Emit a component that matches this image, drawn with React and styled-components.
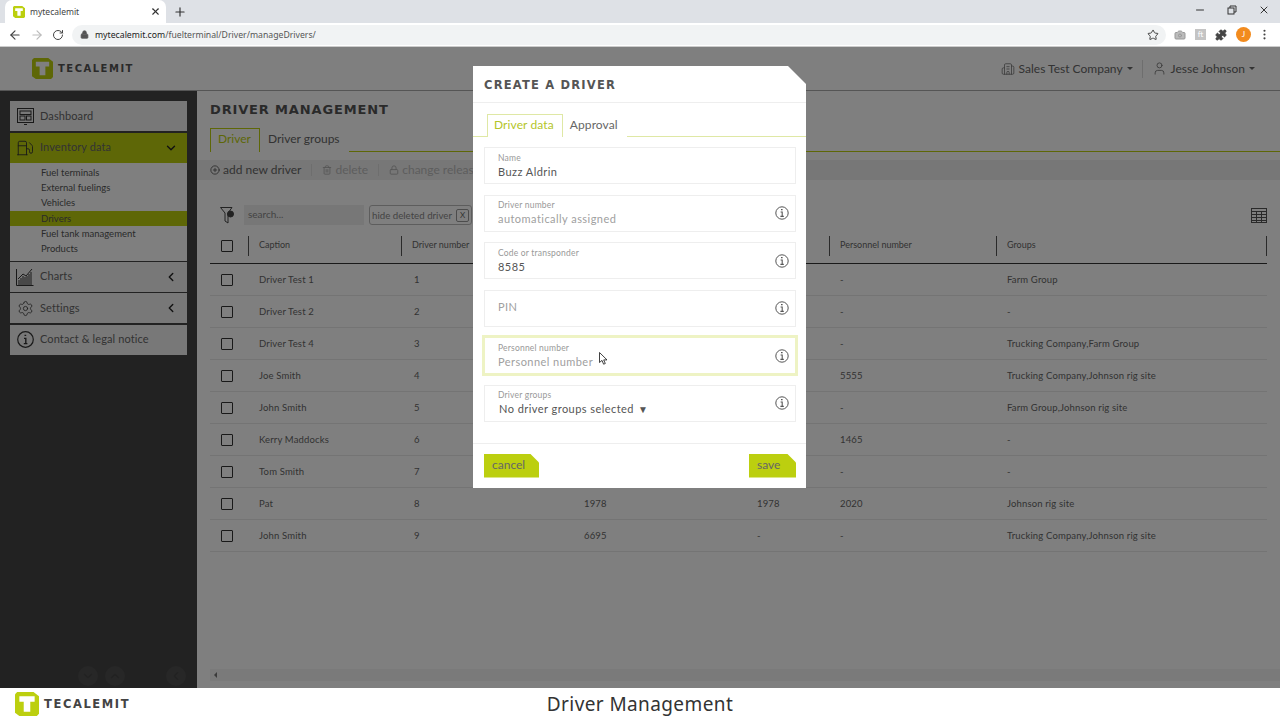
import React from "react";
import styled, { createGlobalStyle } from "styled-components";
import {
  ArrowLeft,
  ArrowRight,
  RotateCw,
  Lock,
  Star,
  Camera,
  Puzzle,
  MoreVertical,
  X,
  Plus,
  Minus,
  ChevronDown,
  ChevronUp,
  ChevronLeft,
  Fuel,
  Settings,
  Building2,
  User,
  Trash2,
  CirclePlus,
} from "lucide-react";

const green = "#bccf0f";
const font = `Lato, "Noto Sans", sans-serif`;

const GlobalStyle = createGlobalStyle`
  html, body {
    margin: 0;
    padding: 0;
    background: #fff;
  }
  * {
    box-sizing: border-box;
  }
  body {
    font-family: ${font};
    overflow: hidden;
  }
`;

const rows = [
  ["Driver Test 1", "1", "", "", "-", "Farm Group"],
  ["Driver Test 2", "2", "", "", "-", "-"],
  ["Driver Test 4", "3", "", "", "-", "Trucking Company,Farm Group"],
  ["Joe Smith", "4", "", "", "5555", "Trucking Company,Johnson rig site"],
  ["John Smith", "5", "", "", "-", "Farm Group,Johnson rig site"],
  ["Kerry Maddocks", "6", "", "", "1465", "-"],
  ["Tom Smith", "7", "", "", "-", "-"],
  ["Pat", "8", "1978", "1978", "2020", "Johnson rig site"],
  ["John Smith", "9", "6695", "-", "-", "Trucking Company,Johnson rig site"],
];

const subItems = [
  "Fuel terminals",
  "External fuelings",
  "Vehicles",
  "Drivers",
  "Fuel tank management",
  "Products",
];

const LogoMark = ({ size = 22 }) => (
  <svg width={size} height={size} viewBox="0 0 22 22">
    <path d="M2 0H17L22 4V20L20 22H4L0 19V2Z" fill={green} />
    <path d="M4 4H18V9H14V18H8V9H4Z" fill="#fff" />
  </svg>
);

const InfoIcon = () => (
  <svg width="14" height="14" viewBox="0 0 14 14" fill="none" stroke="#555">
    <circle cx="7" cy="7" r="6.2" strokeWidth="1" />
    <path d="M6 3.6H7.6M5.6 6H7.2V10.2M5.4 10.4H8.8" strokeWidth="1.1" />
  </svg>
);

const DashIcon = () => (
  <svg width="17" height="17" viewBox="0 0 17 17" fill="none" stroke="#333">
    <rect x="0.5" y="0.5" width="16" height="14" />
    <rect x="3" y="3" width="11" height="3.5" />
    <rect x="3" y="8" width="5" height="4" />
    <rect x="9.5" y="8" width="4.5" height="4" />
    <path d="M7 16.5H10" />
  </svg>
);

const ChartIcon = () => (
  <svg width="18" height="18" viewBox="0 0 18 18" fill="none" stroke="#333">
    <path d="M0.5 1V17.5H17.5" />
    <path d="M2 11L7 6L10 8L16 1" />
    <path d="M3 17V12M5 17V10M7 17V8M9 17V9M11 17V8M13 17V6M15 17V4" />
  </svg>
);

const MenuInfoIcon = () => (
  <svg width="17" height="17" viewBox="0 0 17 17" fill="none" stroke="#333">
    <circle cx="8.5" cy="8.5" r="7.8" strokeWidth="1.2" />
    <path d="M7.5 4.4H9.2M7 7.4H8.8V12.4M6.8 12.6H10.4" strokeWidth="1.4" />
  </svg>
);

const FilterIcon = () => (
  <svg width="16" height="17" viewBox="0 0 16 17" fill="none" stroke="#444">
    <path d="M0.5 0.5H12L8 6V16L5 14V6Z" />
    <circle cx="10.5" cy="7" r="3" fill="#444" />
  </svg>
);

const GridIcon = () => (
  <svg width="16" height="15" viewBox="0 0 16 15" fill="none" stroke="#555">
    <rect x="0.5" y="0.5" width="15" height="14" />
    <path d="M0.5 3.5H15.5M0.5 6.5H15.5M0.5 9.5H15.5M0.5 12.5H15.5" />
    <path d="M5.5 3.5V14.5M10.5 3.5V14.5" />
  </svg>
);

const CursorIcon = () => (
  <svg width="9" height="13" viewBox="0 0 9 13">
    <path
      d="M0.5 0.5V10.5L3 8.4L4.6 12.2L6.3 11.5L4.7 7.9H8Z"
      fill="#fff"
      stroke="#111"
      strokeWidth="0.8"
    />
  </svg>
);

const RestoreIcon = () => (
  <svg width="10" height="10" viewBox="0 0 10 10" fill="none" stroke="#333">
    <rect x="1" y="3" width="6" height="6" />
    <path d="M3 3V1H9V7H7" />
  </svg>
);

const Field = ({ label, value, muted, info = true, focused, bare }) => (
  <FieldBox $focused={focused}>
    <div>
      {label && <FieldLabel>{label}</FieldLabel>}
      <FieldValue $muted={muted} $bare={bare}>
        {value}
      </FieldValue>
    </div>
    {info && (
      <InfoSlot>
        <InfoIcon />
      </InfoSlot>
    )}
  </FieldBox>
);

export default function App() {
  return (
    <Shell>
      <GlobalStyle />
      <TabStrip>
        <BrowserTab>
          <Favicon>
            <LogoMark size={12} />
          </Favicon>
          <TabTitle>mytecalemit</TabTitle>
          <X size={11} color="#333" strokeWidth={2.4} />
        </BrowserTab>
        <NewTab>
          <Plus size={14} color="#333" strokeWidth={2} />
        </NewTab>
        <WindowControls>
          <Minus size={12} color="#333" />
          <RestoreIcon />
          <X size={12} color="#333" />
        </WindowControls>
      </TabStrip>
      <Toolbar>
        <NavIcons>
          <ArrowLeft size={14} color="#444" />
          <ArrowRight size={14} color="#bbb" />
          <RotateCw size={12} color="#444" />
        </NavIcons>
        <UrlBar>
          <Lock size={9} color="#555" fill="#555" />
          <UrlText>
            mytecalemit.com<span>/fuelterminal/Driver/manageDrivers/</span>
          </UrlText>
          <Star size={12} color="#444" />
        </UrlBar>
        <ExtensionIcons>
          <Camera size={12} color="#999" fill="#bbb" />
          <ExtBox>ft</ExtBox>
          <Puzzle size={12} color="#444" fill="#444" />
        </ExtensionIcons>
        <Avatar>J</Avatar>
        <MoreVertical size={13} color="#444" />
      </Toolbar>

      <Page>
        <Header>
          <Brand>
            <LogoMark size={21} />
            <BrandName>TECALEMIT</BrandName>
          </Brand>
          <HeaderRight>
            <HeaderItem>
              <Building2 size={14} color="#777" strokeWidth={1.4} />
              Sales Test Company
              <Caret />
            </HeaderItem>
            <HeaderDivider />
            <HeaderItem>
              <User size={15} color="#777" strokeWidth={1.4} />
              Jesse Johnson
              <Caret />
            </HeaderItem>
          </HeaderRight>
        </Header>
        <Body>
          <Sidebar>
            <MenuItem>
              <MenuIcon>
                <DashIcon />
              </MenuIcon>
              Dashboard
            </MenuItem>
            <MenuItem $active $open>
              <MenuIcon>
                <Fuel size={18} color="#333" strokeWidth={1.2} />
              </MenuIcon>
              Inventory data
              <MenuChevron>
                <ChevronDown size={14} color="#222" strokeWidth={2.4} />
              </MenuChevron>
            </MenuItem>
            <SubMenu>
              {subItems.map((item) => (
                <SubItem key={item} $active={item === "Drivers"}>
                  {item}
                </SubItem>
              ))}
            </SubMenu>
            <MenuItem>
              <MenuIcon>
                <ChartIcon />
              </MenuIcon>
              Charts
              <MenuChevron>
                <ChevronLeft size={14} color="#222" strokeWidth={2.4} />
              </MenuChevron>
            </MenuItem>
            <MenuItem>
              <MenuIcon>
                <Settings size={17} color="#333" strokeWidth={1.1} />
              </MenuIcon>
              Settings
              <MenuChevron>
                <ChevronLeft size={14} color="#222" strokeWidth={2.4} />
              </MenuChevron>
            </MenuItem>
            <MenuItem>
              <MenuIcon>
                <MenuInfoIcon />
              </MenuIcon>
              Contact &amp; legal notice
            </MenuItem>
            <SidebarFoot>
              <RoundButton>
                <ChevronDown size={14} color="#444" />
              </RoundButton>
              <RoundButton>
                <ChevronUp size={14} color="#444" />
              </RoundButton>
              <RoundButton $push>
                <ChevronLeft size={14} color="#444" />
              </RoundButton>
            </SidebarFoot>
          </Sidebar>
          <Main>
            <Title>DRIVER MANAGEMENT</Title>
            <PageTabs>
              <PageTab $active>Driver</PageTab>
              <PageTab>Driver groups</PageTab>
            </PageTabs>
            <ActionBar>
              <Action>
                <CirclePlus size={10} color="#555" />
                add new driver
              </Action>
              <ActionSep />
              <Action $off>
                <Trash2 size={10} color="#aaa" />
                delete
              </Action>
              <ActionSep />
              <Action $off>
                <Lock size={10} color="#aaa" />
                change release
              </Action>
            </ActionBar>
            <FilterRow>
              <FilterIcon />
              <SearchBox>search...</SearchBox>
              <Chip>
                hide deleted driver
                <ChipX>X</ChipX>
              </Chip>
              <GridToggle>
                <GridIcon />
              </GridToggle>
            </FilterRow>
            <HeadRow>
              <CheckCell>
                <Check />
              </CheckCell>
              <HeadCell>Caption</HeadCell>
              <HeadCell>Driver number</HeadCell>
              <HeadCell>Code or transponder</HeadCell>
              <HeadCell>PIN</HeadCell>
              <HeadCell>Personnel number</HeadCell>
              <HeadCell $last>Groups</HeadCell>
            </HeadRow>
            {rows.map((row) => (
              <Row key={row[1]}>
                <CheckCell>
                  <Check />
                </CheckCell>
                <Cell>{row[0]}</Cell>
                <Cell $indent>{row[1]}</Cell>
                <Cell>{row[2]}</Cell>
                <Cell>{row[3]}</Cell>
                <Cell>{row[4]}</Cell>
                <Cell>{row[5]}</Cell>
              </Row>
            ))}
            <ScrollBar>
              <ScrollArrow />
            </ScrollBar>
          </Main>
        </Body>
        <Backdrop />
        <Modal>
          <ModalTitle>CREATE A DRIVER</ModalTitle>
          <ModalTabs>
            <ModalTab $active>Driver data</ModalTab>
            <ModalTab>Approval</ModalTab>
          </ModalTabs>
          <FieldList>
            <Field label="Name" value="Buzz Aldrin" info={false} />
            <Field label="Driver number" value="automatically assigned" muted />
            <Field label="Code or transponder" value="8585" />
            <Field value="PIN" muted bare />
            <Field
              label="Personnel number"
              value="Personnel number"
              muted
              focused
            />
            <Field
              label="Driver groups"
              value={
                <GroupValue>
                  No driver groups selected
                  <GroupArrow>▼</GroupArrow>
                </GroupValue>
              }
            />
          </FieldList>
          <ModalFooter>
            <CutButton $width={55}>cancel</CutButton>
            <CutButton $width={47}>save</CutButton>
          </ModalFooter>
        </Modal>
        <Pointer>
          <CursorIcon />
        </Pointer>
      </Page>

      <Caption>
        <FootBrand>
          <LogoMark size={24} />
          <FootName>TECALEMIT</FootName>
        </FootBrand>
        Driver Management
      </Caption>
    </Shell>
  );
}

const Shell = styled.div`
  width: 1280px;
  height: 720px;
  display: flex;
  flex-direction: column;
  overflow: hidden;
`;

const TabStrip = styled.div`
  height: 23px;
  background: #dee1e6;
  display: flex;
  align-items: flex-end;
  padding-left: 5px;
  flex: none;
`;

const BrowserTab = styled.div`
  width: 161px;
  height: 23px;
  background: #fff;
  border-radius: 7px 7px 0 0;
  display: flex;
  align-items: center;
  padding: 0 5px 0 8px;
`;

const Favicon = styled.span`
  display: flex;
  margin-right: 5px;
`;

const TabTitle = styled.span`
  flex: 1;
  font-family: "Noto Sans", sans-serif;
  font-size: 8.5px;
  color: #444;
`;

const NewTab = styled.div`
  width: 28px;
  height: 23px;
  display: flex;
  align-items: center;
  justify-content: center;
`;

const WindowControls = styled.div`
  margin-left: auto;
  height: 23px;
  width: 92px;
  padding: 0 10px 4px 6px;
  display: flex;
  align-items: center;
  justify-content: space-between;
`;

const Toolbar = styled.div`
  height: 24px;
  background: #fff;
  display: flex;
  align-items: center;
  flex: none;
  border-bottom: 1px solid #ccc;
`;

const NavIcons = styled.div`
  width: 72px;
  padding: 0 8px;
  display: flex;
  align-items: center;
  justify-content: space-between;
`;

const UrlBar = styled.div`
  width: 1094px;
  height: 20px;
  background: #f1f3f4;
  border-radius: 10px;
  display: flex;
  align-items: center;
  padding: 0 7px 0 8px;
`;

const UrlText = styled.span`
  flex: 1;
  font-family: "Noto Sans", sans-serif;
  font-size: 8.7px;
  color: #222;
  margin-left: 6px;
  span {
    color: #555;
  }
`;

const ExtensionIcons = styled.div`
  padding-left: 8px;
  margin-right: 9px;
  display: flex;
  align-items: center;
  gap: 9px;
`;

const ExtBox = styled.span`
  width: 11px;
  height: 11px;
  background: #c4c4c4;
  color: #fff;
  font-size: 8px;
  line-height: 11px;
  text-align: center;
`;

const Avatar = styled.div`
  width: 15px;
  height: 15px;
  border-radius: 50%;
  background: #f28b1e;
  color: #fff;
  font-size: 8px;
  line-height: 15px;
  text-align: center;
  margin-right: 7px;
`;

const Page = styled.div`
  position: relative;
  flex: 1;
  display: flex;
  flex-direction: column;
  min-height: 0;
  background: #fff;
`;

const Header = styled.div`
  height: 44px;
  display: flex;
  align-items: center;
  justify-content: space-between;
  padding: 0 25px 0 32px;
  border-bottom: 1px solid #aaa;
  flex: none;
`;

const Brand = styled.div`
  display: flex;
  align-items: center;
  gap: 5px;
`;

const BrandName = styled.span`
  font-family: "DejaVu Sans", sans-serif;
  font-weight: 700;
  font-size: 10px;
  letter-spacing: 1.5px;
  color: #555;
`;

const HeaderRight = styled.div`
  display: flex;
  align-items: center;
`;

const HeaderItem = styled.div`
  display: flex;
  align-items: center;
  gap: 4px;
  font-size: 12px;
  color: #666;
`;

const HeaderDivider = styled.div`
  width: 1px;
  height: 18px;
  background: #ddd;
  margin: 0 9px;
`;

const Caret = styled.span`
  width: 0;
  height: 0;
  border-left: 3px solid transparent;
  border-right: 3px solid transparent;
  border-top: 3px solid #666;
`;

const Body = styled.div`
  flex: 1;
  display: flex;
  min-height: 0;
`;

const Sidebar = styled.div`
  width: 197px;
  flex: none;
  background: #444;
  padding: 10px 10px 0;
  display: flex;
  flex-direction: column;
`;

const MenuItem = styled.div`
  height: 30px;
  margin-bottom: ${(p) => (p.$open ? "0" : "1.5px")};
  background: ${(p) => (p.$active ? green : "#f0f0f0")};
  display: flex;
  align-items: center;
  padding-bottom: 2px;
  font-size: 11px;
  letter-spacing: 0.1px;
  color: #666;
  flex: none;
`;

const MenuIcon = styled.span`
  width: 30px;
  display: flex;
  justify-content: center;
  margin-top: 2px;
`;

const MenuChevron = styled.span`
  margin-left: auto;
  margin-right: 9px;
  margin-top: 2px;
  display: flex;
`;

const SubMenu = styled.div`
  height: 98px;
  margin-bottom: 1px;
  padding-top: 2.5px;
  background: #fff;
  flex: none;
`;

const SubItem = styled.div`
  height: 15.2px;
  line-height: 15px;
  padding-left: 31px;
  font-size: 9.5px;
  color: #555;
  background: ${(p) => (p.$active ? green : "transparent")};
`;

const SidebarFoot = styled.div`
  margin-top: auto;
  height: 22px;
  display: flex;
  align-items: flex-start;
  gap: 7px;
  padding-left: 68px;
`;

const RoundButton = styled.span`
  width: 20px;
  height: 20px;
  border-radius: 50%;
  background: #4e4e4e;
  display: flex;
  align-items: center;
  justify-content: center;
  margin-left: ${(p) => (p.$push ? "34px" : "0")};
`;

const Main = styled.div`
  flex: 1;
  min-width: 0;
  padding: 11px 0 0 13px;
  display: flex;
  flex-direction: column;
`;

const Title = styled.div`
  font-family: "DejaVu Sans", sans-serif;
  font-weight: 700;
  font-size: 13px;
  height: 16px;
  line-height: 16px;
  letter-spacing: 0.85px;
  color: #555;
`;

const PageTabs = styled.div`
  margin-top: 10px;
  height: 24px;
  display: flex;
  border-bottom: 1px solid ${green};
`;

const PageTab = styled.div`
  height: 24px;
  padding: 0 8px 0 7px;
  font-size: 12px;
  line-height: 19px;
  color: ${(p) => (p.$active ? green : "#666")};
  background: #fff;
  border: 1px solid ${(p) => (p.$active ? green : "transparent")};
  border-bottom: none;
`;

const ActionBar = styled.div`
  margin-top: 8px;
  margin-left: -13px;
  padding-left: 13px;
  height: 20px;
  background: #eee;
  display: flex;
  align-items: center;
  gap: 10px;
`;

const Action = styled.span`
  display: flex;
  align-items: center;
  gap: 3px;
  font-size: 12px;
  line-height: 18px;
  margin-bottom: 1px;
  color: ${(p) => (p.$off ? "#bbb" : "#666")};
`;

const ActionSep = styled.span`
  width: 1px;
  height: 12px;
  background: #ddd;
`;

const FilterRow = styled.div`
  margin-top: 25px;
  height: 20px;
  display: flex;
  align-items: center;
  padding-left: 10px;
  padding-right: 13px;
`;

const SearchBox = styled.div`
  width: 120px;
  height: 20px;
  margin-left: 8px;
  background: #eee;
  padding-left: 4px;
  font-size: 10px;
  line-height: 19px;
  color: #888;
`;

const Chip = styled.div`
  width: 103px;
  height: 20px;
  margin-left: 5px;
  border: 1px solid #bbb;
  border-radius: 3px;
  padding-left: 2px;
  display: flex;
  align-items: center;
  justify-content: space-between;
  font-size: 9.7px;
  white-space: nowrap;
  color: #888;
`;

const ChipX = styled.span`
  width: 13px;
  height: 13px;
  margin-right: 2px;
  border: 1px solid #999;
  border-radius: 2px;
  font-size: 8px;
  line-height: 11px;
  text-align: center;
  color: #666;
`;

const GridToggle = styled.span`
  margin-left: auto;
  display: flex;
`;

const columns = "38px 153px 172px 173px 83px 167px 271px";

const HeadRow = styled.div`
  margin-top: 10px;
  padding-bottom: 6px;
  width: 1057px;
  height: 29px;
  display: grid;
  grid-template-columns: ${columns};
  align-items: center;
  border-bottom: 1px solid #333;
`;

const Row = styled.div`
  width: 1057px;
  height: 32px;
  display: grid;
  grid-template-columns: ${columns};
  align-items: center;
  border-bottom: 1px solid #e8e8e8;
`;

const CheckCell = styled.div`
  padding-left: 11px;
  display: flex;
`;

const Check = styled.span`
  width: 12px;
  height: 12px;
  border: 1px solid #333;
  border-radius: 1px;
  background: #fff;
`;

const HeadCell = styled.div`
  height: 20px;
  line-height: 17px;
  padding-left: 10px;
  font-size: 9px;
  color: #666;
  white-space: nowrap;
  border-left: 1px solid #555;
  border-right: ${(p) => (p.$last ? "1px solid #555" : "none")};
`;

const Cell = styled.div`
  padding-left: ${(p) => (p.$indent ? "13px" : "11px")};
  padding-bottom: 1px;
  font-size: 9.5px;
  letter-spacing: 0.15px;
  color: #666;
  white-space: nowrap;
`;

const ScrollBar = styled.div`
  margin: auto 0 7px 0;
  height: 12px;
  background: #f4f4f4;
  display: flex;
  align-items: center;
  padding-left: 4px;
`;

const ScrollArrow = styled.span`
  width: 0;
  height: 0;
  border-top: 3px solid transparent;
  border-bottom: 3px solid transparent;
  border-right: 3px solid #777;
`;

const Backdrop = styled.div`
  position: absolute;
  inset: 0;
  background: rgba(0, 0, 0, 0.5);
`;

const Modal = styled.div`
  position: absolute;
  left: 473px;
  top: 19px;
  width: 333px;
  height: 422px;
  background: #fff;
  clip-path: polygon(0 0, 315px 0, 100% 18px, 100% 100%, 0 100%);
  display: flex;
  flex-direction: column;
`;

const ModalTitle = styled.div`
  height: 37px;
  padding-left: 11px;
  line-height: 38px;
  font-family: "DejaVu Sans", sans-serif;
  font-weight: 700;
  font-size: 11.5px;
  letter-spacing: 1.2px;
  color: #555;
  border-bottom: 1px solid #eee;
`;

const ModalTabs = styled.div`
  margin-top: 11px;
  height: 23px;
  padding-left: 14px;
  display: flex;
  border-bottom: 1px solid #dfe8a5;
`;

const ModalTab = styled.div`
  height: 23px;
  padding: 0 8px 0 6px;
  font-size: 12px;
  letter-spacing: 0.1px;
  line-height: 19px;
  color: ${(p) => (p.$active ? "#b4c52a" : "#666")};
  background: #fff;
  border: 1px solid ${(p) => (p.$active ? "#dfe8a5" : "transparent")};
  border-bottom: none;
`;

const FieldList = styled.div`
  margin: 10px 10px 0 11px;
  display: flex;
  flex-direction: column;
  gap: 10.5px;
`;

const FieldBox = styled.div`
  height: 37px;
  padding: 4.5px 6px 0 13px;
  display: flex;
  align-items: flex-start;
  justify-content: space-between;
  border: 1px solid #eee;
  ${(p) =>
    p.$focused &&
    `
    border-color: #eef3c4;
    box-shadow: 0 0 0 2px #eef3c4;
  `}
`;

const FieldLabel = styled.div`
  font-size: 8.5px;
  line-height: 11px;
  letter-spacing: 0.2px;
  color: #999;
`;

const FieldValue = styled.div`
  font-size: 11px;
  line-height: 16px;
  letter-spacing: 0.45px;
  white-space: pre;
  margin-top: ${(p) => (p.$bare ? "3.5px" : "0")};
  color: ${(p) => (p.$muted ? "#a0a0a0" : "#555")};
`;

const GroupValue = styled.span`
  margin-left: 1px;
  display: flex;
  align-items: center;
`;

const GroupArrow = styled.span`
  margin-left: 4px;
  font-size: 10px;
`;

const InfoSlot = styled.span`
  margin-top: 6px;
  display: flex;
`;

const ModalFooter = styled.div`
  margin-top: 21px;
  padding: 10px 10px 0 11px;
  border-top: 1px solid #eee;
  display: flex;
  justify-content: space-between;
`;

const CutButton = styled.div`
  width: ${(p) => p.$width}px;
  height: 24px;
  padding-left: 8px;
  background: ${green};
  clip-path: polygon(0 0, calc(100% - 9px) 0, 100% 9px, 100% 100%, 0 100%);
  font-size: 12px;
  line-height: 22px;
  color: #666;
`;

const Pointer = styled.span`
  position: absolute;
  left: 599px;
  top: 305px;
  display: flex;
`;

const Caption = styled.div`
  position: relative;
  height: 32px;
  flex: none;
  background: #fff;
  text-align: center;
  font-family: "Noto Sans", sans-serif;
  font-size: 19px;
  line-height: 32px;
  letter-spacing: 0.4px;
  color: #333;
`;

const FootBrand = styled.div`
  position: absolute;
  left: 15px;
  top: 4px;
  display: flex;
  align-items: center;
  gap: 5px;
`;

const FootName = styled.span`
  font-family: "DejaVu Sans", sans-serif;
  font-weight: 700;
  font-size: 11.5px;
  line-height: 22px;
  letter-spacing: 1.6px;
  color: #444;
`;
